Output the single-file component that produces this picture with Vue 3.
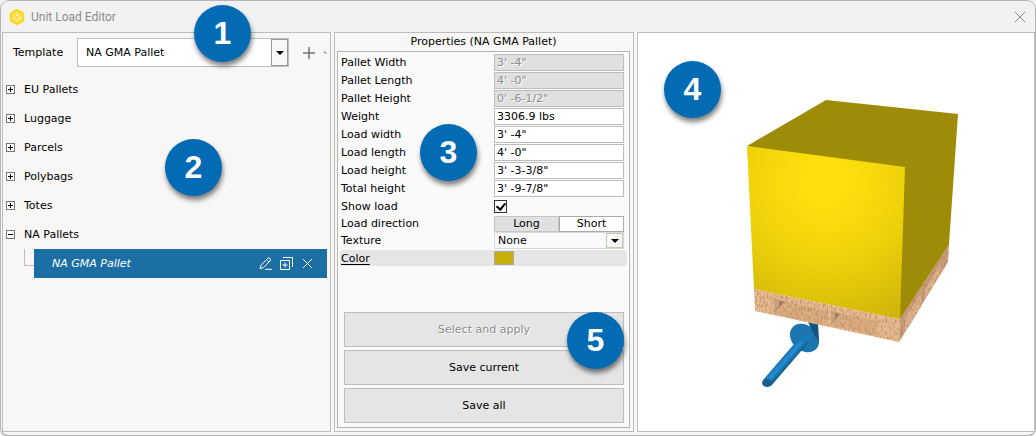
<script setup>
import { ref, reactive } from "vue";

const template = ref("NA GMA Pallet");
const texture = ref("None");
const showLoad = ref(true);
const direction = ref("Long");

const groups = reactive([
  { name: "EU Pallets", open: false },
  { name: "Luggage", open: false },
  { name: "Parcels", open: false },
  { name: "Polybags", open: false },
  { name: "Totes", open: false },
  { name: "NA Pallets", open: true, items: ["NA GMA Pallet"] },
]);

const fields = reactive([
  { id: "pallet-width", label: "Pallet Width", value: "3' -4\"", disabled: true },
  { id: "pallet-length", label: "Pallet Length", value: "4' -0\"", disabled: true },
  { id: "pallet-height", label: "Pallet Height", value: "0' -6-1/2\"", disabled: true },
  { id: "weight", label: "Weight", value: "3306.9 lbs" },
  { id: "load-width", label: "Load width", value: "3' -4\"" },
  { id: "load-length", label: "Load length", value: "4' -0\"" },
  { id: "load-height", label: "Load height", value: "3' -3-3/8\"" },
  { id: "total-height", label: "Total height", value: "3' -9-7/8\"" },
]);
</script>

<template>
  <div class="window">
    <header class="titlebar">
      <svg class="logo" viewBox="0 0 16 16" aria-hidden="true">
        <path d="M8 .3 14.7 4v8L8 15.7 1.3 12V4z" fill="#fdd61f" stroke="#fdd61f" stroke-linejoin="round" />
        <path
          d="M8 3.6 11.9 5.8v4.4L8 12.4 4.1 10.2V5.8zM8 6.3 9.8 7.3v2L8 10.3 6.2 9.3v-2zM8 3.6v2.7M4.1 10.2l2.1-.9M11.9 10.2l-2.1-.9"
          fill="none" stroke="#fff3b8" />
      </svg>
      <h1>Unit Load Editor</h1>
      <button class="close" aria-label="Close">
        <svg viewBox="0 0 12 12"><path d="M1 1l10 10M11 1 1 11" fill="none" stroke="#888" /></svg>
      </button>
    </header>

    <main class="panels">
      <section class="panel templates">
        <div class="template-row">
          <label for="template">Template</label>
          <div class="select">
            <select id="template" v-model="template">
              <option>NA GMA Pallet</option>
            </select>
            <span class="arrow"></span>
          </div>
          <button class="add" aria-label="Add">
            <svg viewBox="0 0 12 12"><path d="M6 0v12M0 6h12" fill="none" stroke="#6c757b" stroke-width="1.5" /></svg>
          </button>
          <svg class="more" viewBox="0 0 3 3" aria-hidden="true"><path d="M0 .5l2 2" stroke="#111" /></svg>
        </div>

        <ul class="tree">
          <li v-for="group in groups" :key="group.name">
            <button class="group" @click="group.open = !group.open">
              <svg viewBox="0 0 9 9" aria-hidden="true">
                <rect x=".5" y=".5" width="8" height="8" fill="#fff" stroke="#777" />
                <path :d="group.open ? 'M2 4.5h5' : 'M2 4.5h5M4.5 2v5'" stroke="#000" />
              </svg>
              {{ group.name }}
            </button>
            <ul v-if="group.open && group.items" class="children">
              <li v-for="item in group.items" :key="item">
                <span class="branch"></span>
                <div class="item">
                  <span class="item-name">{{ item }}</span>
                  <button aria-label="Edit">
                    <svg viewBox="0 0 13 13">
                      <path d="M1 11.5 2 8.3 8.6 1.4Q10 .4 11 1.4T11.2 3.8L4.6 10.6zM7.6 2.7l2.2 2.2M6 12.3h7" />
                    </svg>
                  </button>
                  <button aria-label="Duplicate">
                    <svg viewBox="0 0 13 13">
                      <path d="M.5 3.5h9v9h-9zM5 5.5v5M2.5 8h5M3 .5h9.5V10" />
                    </svg>
                  </button>
                  <button aria-label="Delete">
                    <svg viewBox="0 0 13 13"><path d="M2 2l9 9M11 2l-9 9" /></svg>
                  </button>
                </div>
              </li>
            </ul>
          </li>
        </ul>
        <span class="badge badge-1">1</span>
        <span class="badge badge-2">2</span>
      </section>

      <section class="panel properties">
        <h2>Properties ({{ template }})</h2>
        <div class="sheet">
          <div v-for="field in fields" :key="field.id" class="row">
            <label :for="field.id">{{ field.label }}</label>
            <input :id="field.id" v-model="field.value" type="text" :disabled="field.disabled" />
          </div>
          <div class="row">
            <label for="show-load">Show load</label>
            <input id="show-load" v-model="showLoad" type="checkbox" />
          </div>
          <div class="row short">
            <span>Load direction</span>
            <div class="toggle">
              <button :class="{ active: direction === 'Long' }" @click="direction = 'Long'">Long</button>
              <button :class="{ active: direction === 'Short' }" @click="direction = 'Short'">Short</button>
            </div>
          </div>
          <div class="row short">
            <label for="texture">Texture</label>
            <div class="select small">
              <select id="texture" v-model="texture">
                <option>None</option>
              </select>
              <span class="arrow"></span>
            </div>
          </div>
          <div class="row color-row">
            <label for="color">Color</label>
            <button id="color" class="swatch" aria-label="Color"></button>
          </div>

          <div class="actions">
            <button disabled>Select and apply</button>
            <button>Save current</button>
            <button>Save all</button>
          </div>
        </div>
        <span class="badge badge-3">3</span>
        <span class="badge badge-5">5</span>
      </section>

      <section class="panel preview">
        <svg class="scene" viewBox="638 33 396 398" role="img" aria-label="Pallet preview">
          <defs>
            <radialGradient id="front" gradientUnits="userSpaceOnUse" cx="825" cy="182" r="155">
              <stop offset="0" stop-color="#ffe00c" />
              <stop offset=".15" stop-color="#ffdf0c" />
              <stop offset=".5" stop-color="#eed30b" />
              <stop offset="1" stop-color="#cdb309" />
            </radialGradient>
            <linearGradient id="shaft" gradientUnits="userSpaceOnUse" x1="782" y1="358" x2="790" y2="365">
              <stop offset="0" stop-color="#1a72ab" />
              <stop offset=".4" stop-color="#218fd6" />
              <stop offset="1" stop-color="#12557f" />
            </linearGradient>
            <filter id="wood" x="0" y="0" width="1" height="1" color-interpolation-filters="sRGB">
              <feTurbulence type="fractalNoise" baseFrequency=".7 .25" numOctaves="2" seed="4" />
              <feColorMatrix values="0 0 0 0 .7  0 0 0 0 .5  0 0 0 0 .35  2 0 0 0 -.85" />
              <feComposite in2="SourceGraphic" operator="in" result="grain" />
              <feMerge>
                <feMergeNode in="SourceGraphic" />
                <feMergeNode in="grain" />
              </feMerge>
            </filter>
          </defs>

          <!-- direction arrow -->
          <ellipse cx="804.5" cy="338" rx="16" ry="12.5" transform="rotate(42 804.5 338)" fill="#1b75ae" />
          <path d="M808 322h10l1 19-4-4z" fill="#14557f" />
          <path d="M801 336 763 380l8 6 37-43z" fill="url(#shaft)" />
          <ellipse cx="805" cy="339" rx="4" ry="4" fill="#1c7ab8" />
          <ellipse cx="767" cy="383" rx="5" ry="4" fill="#175f90" />

          <!-- pallet -->
          <g filter="url(#wood)">
            <path d="M754 289 900 319 899 342 755 311z" fill="#e8bd93" />
            <path d="M900 319 949 243 948 262 899 342z" fill="#c89e7b" />
            <path d="M905 318 921 293v14L905 332zM925 289 940 264v10L925 299z" fill="#dfb48d" />
            <path d="M774 299l54 12v15l-54-12zM831 311l46 10v14l-46-9z" fill="#dcae84" />
          </g>
          <path d="M774 299 785 302 774 312zM831 311 840 314 831 325z" fill="#9f7e60" />
          <path d="M774 299 779 300V306L774 312zM831 311 835 312V319L831 325z" fill="#c7a17a" />

          <!-- load -->
          <path d="M747 146 826 100 958 114 949 244 900 319 895 180z" fill="#9e8b08" />
          <path d="M747 146 905 167 900 319 754 289z" fill="url(#front)" />
        </svg>
        <span class="badge badge-4">4</span>
      </section>
    </main>
  </div>
</template>

<style>
body {
  margin: 0;
  background: #f2f2f2;
}
</style>

<style scoped>
* {
  box-sizing: border-box;
}
.window {
  display: flex;
  flex-direction: column;
  min-height: 100vh;
  padding: 0 0 3px 1px;
  background: #f8f7f5;
  border: 1px solid #b5b5b5;
  border-bottom-width: 2px;
  border-radius: 9px;
  font-family: "DejaVu Sans", sans-serif;
  font-size: 11px;
  color: #000;
}
button,
input,
select {
  margin: 0;
  padding: 0;
  border: 0;
  border-radius: 0;
  background: none;
  color: inherit;
  font: inherit;
}
svg {
  display: block;
}
ul {
  margin: 0;
  padding: 0;
  list-style: none;
}

/* title bar */
.titlebar {
  display: flex;
  align-items: center;
  height: 31px;
  margin-left: -1px;
  padding: 0 9px 0 8px;
  background: #f2f2f2;
  border-radius: 9px 9px 0 0;
}
.logo {
  width: 16px;
  height: 16px;
}
h1 {
  flex: 1;
  margin: 0 0 0 6px;
  font: 12px Roboto, sans-serif;
  color: #8b8b8b;
}
.close svg {
  width: 12px;
  height: 12px;
}

/* panels */
.panels {
  flex: 1;
  display: grid;
  grid-template-columns: 329fr 300fr 398fr;
  gap: 3px;
}
.panel {
  position: relative;
  border: 1px solid #bdbdbd;
}
.templates {
  padding: 5px 3px;
}
.template-row {
  display: flex;
  align-items: center;
  height: 29px;
  padding-left: 7px;
  margin-bottom: 8px;
}
.template-row label {
  width: 64px;
}
.select {
  flex: 1;
  display: flex;
  height: 29px;
  background: #fff;
  border: 1px solid #bdbdbd;
}
.select select {
  flex: 1;
  min-width: 0;
  padding-left: 8px;
  appearance: none;
}
.arrow {
  display: flex;
  align-items: center;
  justify-content: center;
  width: 17px;
  border: 1px solid #999;
  background: #f8f7f5;
}
.arrow::before {
  content: "";
  border: 4px solid transparent;
  border-top-color: #000;
  border-bottom: 0;
}
.add {
  margin: 0 9px 0 14px;
}
.add svg {
  width: 12px;
  height: 12px;
}
.more {
  width: 3px;
  height: 3px;
}

/* tree */
.group {
  display: flex;
  align-items: center;
  gap: 9px;
  width: 100%;
  height: 29px;
}
.group svg {
  width: 9px;
  height: 9px;
}
.children li {
  display: flex;
  padding-left: 18px;
}
.branch {
  width: 10px;
  height: 17px;
  border: solid #bdbdbd;
  border-width: 0 0 1px 1px;
}
.item {
  flex: 1;
  display: flex;
  align-items: center;
  gap: 8px;
  height: 29px;
  padding: 0 13px 0 18px;
  background: #1b6fa5;
  color: #fff;
}
.item-name {
  flex: 1;
  font-style: italic;
}
.item svg {
  width: 13px;
  height: 13px;
  fill: none;
  stroke: #fff;
}

/* properties */
.properties {
  display: flex;
  flex-direction: column;
  padding: 0 3px 3px 2px;
}
h2 {
  margin: 0;
  font-size: 11px;
  font-weight: normal;
  line-height: 18px;
  text-align: center;
}
.sheet {
  flex: 1;
  display: flex;
  flex-direction: column;
  padding: 1px 2px 4px;
  background: #fafafa;
  border: 1px solid #b5b5b5;
}
.row {
  display: grid;
  grid-template-columns: 153fr 130fr;
  align-items: center;
  height: 18px;
  padding: 0 3px 0 1px;
}
.row.short {
  height: 17px;
}
.row input[type="text"] {
  width: 100%;
  min-width: 0;
  height: 17px;
  padding: 0 2px;
  background: #fff;
  border: 1px solid #bdbdbd;
}
.row input[type="text"]:disabled {
  background: #e0e0e0;
  color: #8c8c8c;
  text-shadow: 1px 1px #fff;
}
.row input[type="checkbox"] {
  display: grid;
  place-content: center;
  width: 13px;
  height: 13px;
  appearance: none;
  background: #fff;
  border: 1px solid #333;
}
.row input[type="checkbox"]:checked::before {
  content: "";
  width: 4px;
  height: 7px;
  margin-bottom: 2px;
  border: solid #000;
  border-width: 0 2px 2px 0;
  transform: rotate(40deg);
}
.toggle {
  display: grid;
  grid-template-columns: 1fr 1fr;
  height: 16px;
}
.toggle button {
  background: #fff;
  border: 1px solid #aaa;
}
.toggle .active {
  background: #e0e0e0;
  border-color: #c4c4c4;
}
.select.small {
  height: 17px;
  background: #fafafa;
  border-color: #d8d8d8;
}
.small select {
  padding-left: 3px;
}
.small .arrow {
  border-color: #b9ceb9;
}
.color-row {
  height: 16px;
  margin-top: 1px;
  background: #e5e5e5;
  border-radius: 4px;
}
.color-row label {
  text-decoration: underline;
  text-underline-offset: 2px;
}
.swatch {
  width: 20px;
  height: 14px;
  background: #c7ae08;
  border: 1px solid #a8a8a8;
}
.actions {
  display: grid;
  gap: 3px;
  margin: auto 3px 0 4px;
}
.actions button {
  height: 35px;
  background: #e5e5e5;
  border: 1px solid #bdbdbd;
}
.actions button:disabled {
  color: #8c8c8c;
  text-shadow: 1px 1px #fff;
}

/* preview */
.preview {
  background: #fff;
}
.scene {
  width: 100%;
  height: 100%;
}

/* numbered callouts */
.badge {
  position: absolute;
  width: 57px;
  height: 57px;
  border-radius: 50%;
  background: #026bb4;
  box-shadow: 1px 4px 5px rgba(0, 0, 0, 0.5);
  color: #fff;
  font: bold 32px/57px "Liberation Sans", Arial, sans-serif;
  text-align: center;
}
.badge-1 {
  top: -28px;
  left: 191px;
}
.badge-2 {
  top: 106px;
  left: 162px;
}
.badge-3 {
  top: 91px;
  left: 85px;
}
.badge-4 {
  top: 28px;
  left: 26px;
}
.badge-5 {
  right: 9px;
  bottom: 62px;
}
</style>
